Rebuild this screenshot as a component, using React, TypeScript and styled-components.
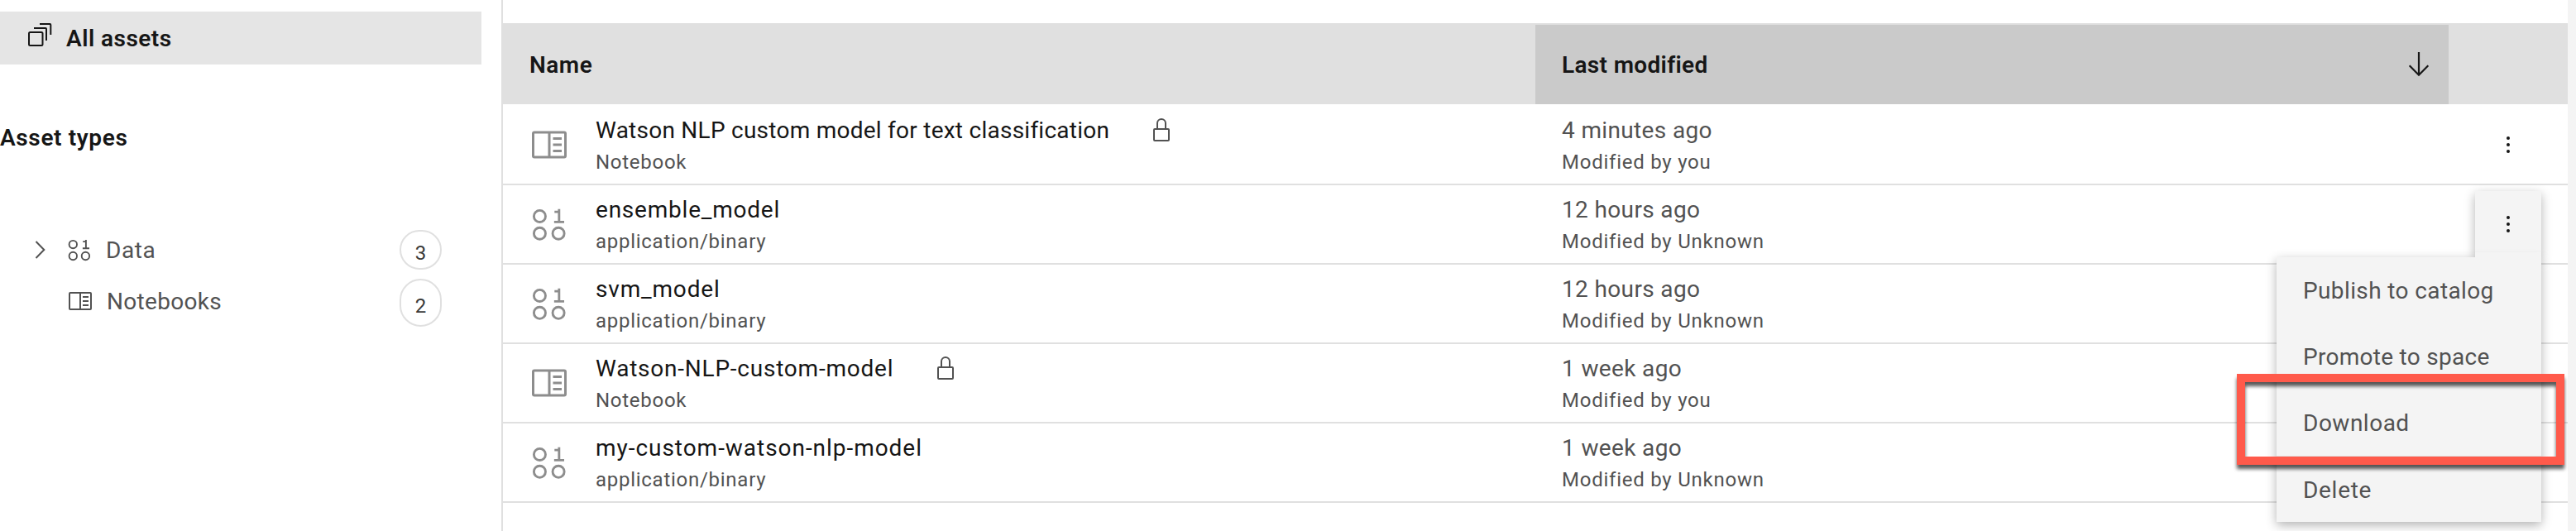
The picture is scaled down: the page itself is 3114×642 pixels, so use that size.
import React from "react";
import styled, { createGlobalStyle } from "styled-components";

const GlobalStyle = createGlobalStyle`
  * { box-sizing: border-box; }
  body {
    margin: 0;
    background: #fff;
    color: #161616;
    font-family: Roboto, "Liberation Sans", sans-serif;
    overflow: hidden;
  }
  svg { display: block; flex: none; overflow: visible; }
`;

const Page = styled.div`
  display: flex;
  width: 3114px;
  height: 642px;
  overflow: hidden;
`;

const Label = styled.span<{ $track?: number }>`
  white-space: nowrap;
  letter-spacing: ${(p) => p.$track ?? 0.4}px;
`;

/* ---------- sidebar ---------- */

const Sidebar = styled.aside`
  width: 608px;
  flex: none;
  padding-top: 14px;
  border-right: 2px solid #e0e0e0;
`;

const AllAssets = styled.div`
  display: flex;
  align-items: center;
  width: 582px;
  height: 64px;
  padding-left: 32px;
  gap: 16px;
  background: #e5e5e5;
  font-size: 28px;
  font-weight: 600;
`;

const SectionTitle = styled.h2`
  margin: 71px 0 93px;
  font-size: 28px;
  line-height: 36px;
  font-weight: 600;
`;

const TypeRow = styled.div<{ $height: number }>`
  display: flex;
  align-items: center;
  width: 534px;
  height: ${(p) => p.$height}px;
  margin-bottom: 11px;
  padding-left: 32px;
  color: #525252;
  font-size: 28px;
`;

const ExpandSlot = styled.div<{ $space: number }>`
  width: 32px;
  height: 32px;
  margin-right: ${(p) => p.$space}px;
`;

const TypeName = styled.div<{ $lift: number }>`
  display: flex;
  align-items: center;
  flex: 1;
  gap: 16px;
  padding-bottom: ${(p) => p.$lift}px;
`;

const Count = styled.div`
  display: flex;
  align-items: center;
  justify-content: center;
  width: 51px;
  height: 100%;
  padding-top: 7px;
  border: 2px solid #e0e0e0;
  border-radius: 26px;
  color: #393939;
  font-size: 24px;
`;

/* ---------- table ---------- */

const Table = styled.main`
  width: 2496px;
  flex: none;
  padding-top: 28px;
`;

const HeaderRow = styled.div`
  display: flex;
  height: 98px;
  margin-bottom: 2px;
  border-top: 2px solid #e0e0e0;
  background: #e0e0e0;
  font-size: 28px;
  font-weight: 600;
`;

const HeaderCell = styled.div<{ $width: number; $sorted?: boolean }>`
  display: flex;
  align-items: center;
  justify-content: space-between;
  width: ${(p) => p.$width}px;
  padding: 0 20px 0 32px;
  background: ${(p) => (p.$sorted ? "#cacaca" : "transparent")};
`;

const Row = styled.div`
  display: flex;
  height: 96px;
  border-bottom: 2px solid #e0e0e0;
`;

const NameCell = styled.div`
  display: flex;
  align-items: center;
  width: 1248px;
  padding-left: 32px;
  gap: 32px;
  color: #8d8d8d;
`;

const TextStack = styled.div`
  display: flex;
  flex-direction: column;
  align-self: flex-start;
  padding-top: 12px;
`;

const Primary = styled.div<{ $muted?: boolean }>`
  display: flex;
  align-items: center;
  gap: 47px;
  height: 36px;
  font-size: 28px;
  line-height: 36px;
  color: ${(p) => (p.$muted ? "#525252" : "#161616")};
`;

const Secondary = styled.div`
  height: 40px;
  font-size: 24px;
  line-height: 40px;
  color: #525252;
`;

const ModifiedCell = styled.div`
  width: 1104px;
  padding-left: 32px;
`;

const ActionCell = styled.div`
  position: relative;
  display: flex;
  align-items: center;
  justify-content: center;
  width: 144px;
`;

const OpenTrigger = styled.div`
  position: absolute;
  left: 32px;
  top: 7px;
  display: flex;
  justify-content: center;
  width: 80px;
  height: 80px;
  padding-top: 24px;
  background: #f4f4f4;
  box-shadow: 0 4px 12px rgba(0, 0, 0, 0.3);
`;

const Menu = styled.div`
  position: absolute;
  z-index: 1;
  right: 32px;
  top: 87px;
  width: 320px;
  background: #f4f4f4;
  box-shadow: 0 4px 12px rgba(0, 0, 0, 0.3);

  &::after {
    content: "";
    position: absolute;
    right: 0;
    top: -6px;
    width: 80px;
    height: 6px;
    background: #f4f4f4;
  }
`;

const MenuItem = styled.div<{ $divided?: boolean }>`
  display: flex;
  align-items: center;
  height: 80px;
  padding-left: 32px;
  border-top: ${(p) => (p.$divided ? "2px solid #e0e0e0" : "none")};
  color: #525252;
  font-size: 28px;
`;

const Highlight = styled.div`
  position: absolute;
  z-index: 2;
  right: 4px;
  top: 228px;
  width: 396px;
  height: 110px;
  border: 10px solid #ff5a4b;
  filter: drop-shadow(0 5px 2px rgba(0, 0, 0, 0.65));
`;

const Gutter = styled.div`
  flex: 1;
  background: #f4f4f4;
`;

/* ---------- icons ---------- */

const StackIcon = () => (
  <svg width="32" height="32" viewBox="0 0 32 32" fill="none" stroke="#161616" strokeWidth="2">
    <rect x="3" y="9" width="16.5" height="16" rx="1.5" />
    <path d="M9 4H23Q24 4 24 5V19" />
    <path d="M16 -1H28.3Q29.3 -1 29.3 0V12" />
  </svg>
);

const BinaryIcon = ({ size }: { size: number }) => (
  <svg width={size} height={size} viewBox="0 0 32 32" fill="none" stroke="currentColor" strokeWidth="1.9">
    <circle cx="8.3" cy="9.6" r="4.7" />
    <circle cx="8.3" cy="23.5" r="4.7" />
    <circle cx="23.4" cy="23.5" r="4.7" />
    <path d="M20.2 6.1H23.9M23.9 3.9V14.2M19.9 14.2H28" />
  </svg>
);

const NotebookIcon = ({ size }: { size: number }) => (
  <svg width={size} height={size} viewBox="0 0 32 32" fill="none" stroke="currentColor" strokeWidth="2">
    <rect x="3" y="6" width="26" height="20" rx="1" />
    <path d="M16 6V26M19 11H26M19 16H26M19 21H26" />
  </svg>
);

const ChevronIcon = () => (
  <svg width="32" height="32" viewBox="0 0 32 32" fill="none" stroke="currentColor" strokeWidth="2">
    <path d="M11.5 6L21.3 16L11.5 26" />
  </svg>
);

const LockIcon = () => (
  <svg width="32" height="32" viewBox="0 0 32 32" fill="none" stroke="#525252" strokeWidth="2">
    <rect x="7" y="14" width="18" height="14" rx="1" />
    <path d="M11 14V7A5 5 0 0 1 21 7V14" />
  </svg>
);

const ArrowDownIcon = () => (
  <svg width="32" height="32" viewBox="0 0 32 32" fill="none" stroke="#161616" strokeWidth="2.2">
    <path d="M16 1V29M4.7 17.3L16 28.8L27.3 17.3" />
  </svg>
);

const OverflowIcon = () => (
  <svg width="32" height="32" viewBox="0 0 32 32" fill="#161616">
    <circle cx="16" cy="8" r="2" />
    <circle cx="16" cy="16" r="2" />
    <circle cx="16" cy="24" r="2" />
  </svg>
);

/* ---------- content ---------- */

type Asset = {
  kind: "notebook" | "binary";
  name: string;
  nameTrack: number;
  locked?: boolean;
  when: string;
  by: string;
  menuState?: "closed" | "open";
};

const assets: Asset[] = [
  { kind: "notebook", name: "Watson NLP custom model for text classification", nameTrack: 0.25, locked: true, when: "4 minutes ago", by: "Modified by you", menuState: "closed" },
  { kind: "binary", name: "ensemble_model", nameTrack: 0.78, when: "12 hours ago", by: "Modified by Unknown", menuState: "open" },
  { kind: "binary", name: "svm_model", nameTrack: 0.82, when: "12 hours ago", by: "Modified by Unknown" },
  { kind: "notebook", name: "Watson-NLP-custom-model", nameTrack: 0.77, locked: true, when: "1 week ago", by: "Modified by you" },
  { kind: "binary", name: "my-custom-watson-nlp-model", nameTrack: 0.96, when: "1 week ago", by: "Modified by Unknown" },
];

const menuItems = [
  { text: "Publish to catalog", track: 0.38 },
  { text: "Promote to space", track: 0.28 },
  { text: "Download", track: 0.5 },
  { text: "Delete", track: 0.7, divided: true },
];

const AssetRow = ({ asset }: { asset: Asset }) => (
  <Row>
    <NameCell>
      {asset.kind === "notebook" ? <NotebookIcon size={48} /> : <BinaryIcon size={48} />}
      <TextStack>
        <Primary>
          <Label $track={asset.nameTrack}>{asset.name}</Label>
          {asset.locked && <LockIcon />}
        </Primary>
        <Secondary>
          <Label $track={0.73}>{asset.kind === "notebook" ? "Notebook" : "application/binary"}</Label>
        </Secondary>
      </TextStack>
    </NameCell>
    <ModifiedCell>
      <TextStack>
        <Primary $muted>
          <Label $track={0.36}>{asset.when}</Label>
        </Primary>
        <Secondary>
          <Label $track={0.76}>{asset.by}</Label>
        </Secondary>
      </TextStack>
    </ModifiedCell>
    <ActionCell>
      {asset.menuState === "closed" && <OverflowIcon />}
      {asset.menuState === "open" && (
        <>
          <OpenTrigger>
            <OverflowIcon />
          </OpenTrigger>
          <Menu>
            {menuItems.map((item) => (
              <MenuItem key={item.text} $divided={item.divided}>
                <Label $track={item.track}>{item.text}</Label>
              </MenuItem>
            ))}
          </Menu>
          <Highlight />
        </>
      )}
    </ActionCell>
  </Row>
);

export default function App() {
  return (
    <Page>
      <GlobalStyle />
      <Sidebar>
        <AllAssets>
          <StackIcon />
          <Label $track={0.47}>All assets</Label>
        </AllAssets>
        <SectionTitle>
          <Label $track={0.64}>Asset types</Label>
        </SectionTitle>
        <TypeRow $height={48}>
          <ExpandSlot $space={16}>
            <ChevronIcon />
          </ExpandSlot>
          <TypeName $lift={0}>
            <BinaryIcon size={32} />
            <Label $track={0.6}>Data</Label>
          </TypeName>
          <Count>3</Count>
        </TypeRow>
        <TypeRow $height={58}>
          <ExpandSlot $space={17} />
          <TypeName $lift={4}>
            <NotebookIcon size={32} />
            <Label $track={0.3}>Notebooks</Label>
          </TypeName>
          <Count>2</Count>
        </TypeRow>
      </Sidebar>
      <Table>
        <HeaderRow>
          <HeaderCell $width={1248}>
            <Label $track={0.5}>Name</Label>
          </HeaderCell>
          <HeaderCell $width={1104} $sorted>
            <Label $track={0.34}>Last modified</Label>
            <ArrowDownIcon />
          </HeaderCell>
        </HeaderRow>
        {assets.map((asset) => (
          <AssetRow key={asset.name} asset={asset} />
        ))}
      </Table>
      <Gutter />
    </Page>
  );
}
